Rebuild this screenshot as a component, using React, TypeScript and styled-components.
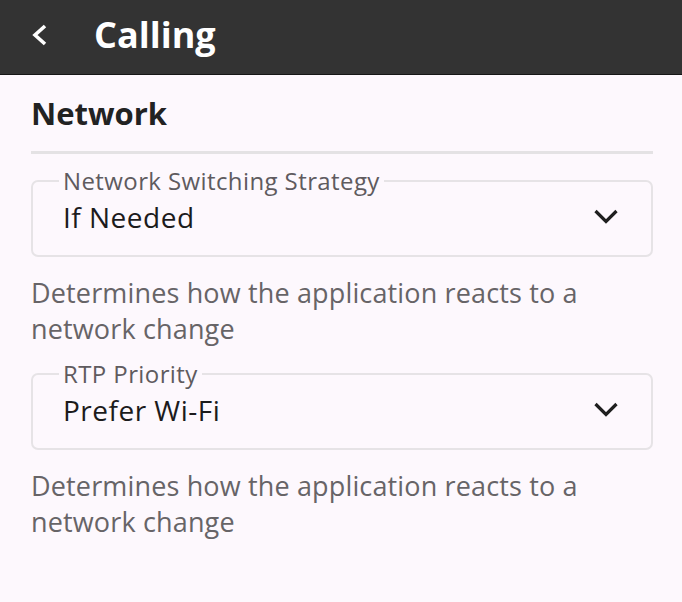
import styled, { createGlobalStyle } from 'styled-components';

const GlobalStyle = createGlobalStyle`
    html, body {
        margin: 0;
        padding: 0;
        background: #fdf8fd;
        font-family: "Open Sans", "Noto Sans", sans-serif;
    }
`;

// Styled components
const Screen = styled.div`
    width: 682px;
    min-height: 602px;
    background: #fdf8fd;
`;

const TopBar = styled.header`
    height: 74px;
    background: #333333;
    border-bottom: 1px solid #161616;
    display: flex;
    align-items: center;
    padding-left: 30px;
    gap: 46px;
`;

const BackButton = styled.button`
    background: none;
    border: none;
    padding: 0;
    width: 18px;
    height: 24px;
    display: flex;
    margin-top: -4px;
`;

const Title = styled.h1`
    margin: -4px 0 0;
    color: #fff;
    font-size: 36px;
    font-weight: 700;
    line-height: 36px;
`;

const Content = styled.main`
    padding: 0 29px 0 31px;
`;

const SectionTitle = styled.h2`
    margin: 0;
    padding-top: 18px;
    padding-bottom: 18px;
    font-size: 31px;
    font-weight: 700;
    line-height: 40px;
    color: #222;
    border-bottom: 3px solid #e4e2e4;
`;

const Field = styled.fieldset`
    margin: 13px 0 0;
    border: 2px solid #e6e3e6;
    border-radius: 7px;
    padding: 0 33px 20px 26px;
    display: flex;
    align-items: center;
    justify-content: space-between;
`;

const FieldLabel = styled.legend`
    padding: 0 4px;
    font-size: 24px;
    line-height: 28px;
    color: #5f5b5f;
    letter-spacing: 0.4px;
`;

const FieldValue = styled.span`
    margin-top: 4px;
    padding-left: 4px;
    font-size: 28px;
    line-height: 36px;
    color: #1c1b1c;
    letter-spacing: 0.5px;
`;

const ChevronBox = styled.span`
    display: flex;
    margin-top: 4px;
`;

const Helper = styled.p`
    margin: 18px 0 0;
    font-size: 27px;
    line-height: 36px;
    color: #676467;
    letter-spacing: 0.15px;
`;

const Chevron = () => (
    <ChevronBox>
        <svg width="24" height="16" viewBox="0 0 24 16">
            <polyline points="1.5,2 12,12.5 22.5,2" fill="none" stroke="#1f1f1f" strokeWidth="3.2" />
        </svg>
    </ChevronBox>
);

function Select({ label, value }: { label: string; value: string }) {
    return (
        <Field>
            <FieldLabel>{label}</FieldLabel>
            <FieldValue>{value}</FieldValue>
            <Chevron />
        </Field>
    );
}

export default function App() {
    return (
        <Screen>
            <GlobalStyle />
            <TopBar>
                <BackButton aria-label="Back">
                    <svg width="18" height="24" viewBox="0 0 18 24">
                        <polyline points="15,3 5,12 15,21" fill="none" stroke="#fff" strokeWidth="3.6" />
                    </svg>
                </BackButton>
                <Title>Calling</Title>
            </TopBar>
            <Content>
                <SectionTitle>Network</SectionTitle>
                <Select label="Network Switching Strategy" value="If Needed" />
                <Helper>Determines how the application reacts to a network change</Helper>
                <Select label="RTP Priority" value="Prefer Wi-Fi" />
                <Helper>Determines how the application reacts to a network change</Helper>
            </Content>
        </Screen>
    );
}
